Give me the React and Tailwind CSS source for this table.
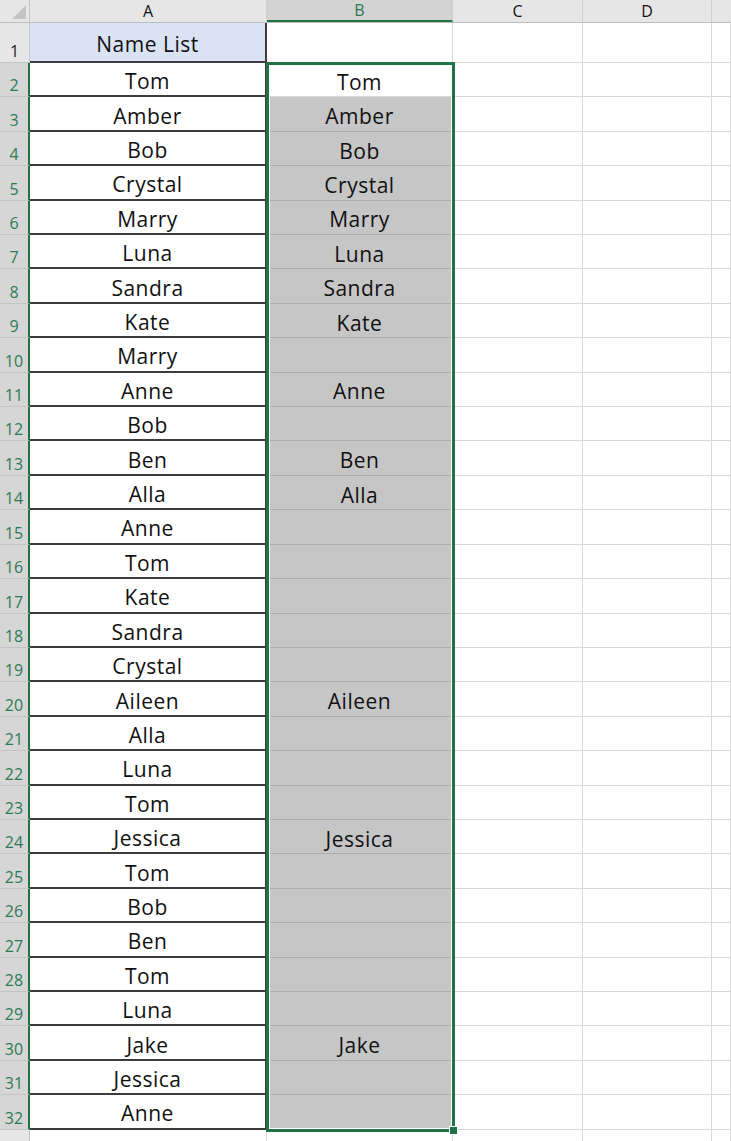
import React from "react";

const NAMES = [
  "Tom", "Amber", "Bob", "Crystal", "Marry", "Luna", "Sandra", "Kate", "Marry", "Anne",
  "Bob", "Ben", "Alla", "Anne", "Tom", "Kate", "Sandra", "Crystal", "Aileen", "Alla",
  "Luna", "Tom", "Jessica", "Tom", "Bob", "Ben", "Tom", "Luna", "Jake", "Jessica", "Anne",
];

// column B keeps only the first time a name shows up
const seen = new Set();
const UNIQUE = NAMES.map((n) => {
  if (seen.has(n)) return "";
  seen.add(n);
  return n;
});

const font = { fontFamily: '"Open Sans", "Liberation Sans", sans-serif' };

function HeaderCell({ label, className = "" }) {
  return (
    <div className={`h-full flex items-center justify-center text-[16px] font-medium leading-none border-r border-[#d0d0d0] ${className}`}>
      {label}
    </div>
  );
}

function RowLabel({ n, active }) {
  return (
    <div
      className={`w-[30px] shrink-0 h-full flex items-end justify-center pb-[3px] text-[16px] font-medium leading-none border-b border-[#c4c4c4] ${
        active ? "bg-[#d6d6d6] text-[#2f7a55] border-r-2 border-r-[#217346]" : "bg-[#e6e6e6] text-[#222] border-r border-r-[#c4c4c4]"
      }`}
    >
      {n}
    </div>
  );
}

function Blank({ w }) {
  return <div className={`${w} h-full border-r border-b border-[#d9d9d9] bg-white`} />;
}

const cellText = "flex items-center justify-center pt-[5px] text-[21px] font-medium tracking-[0.5px] leading-none";

export default function App() {
  return (
    <div className="relative w-[731px] h-[1141px] overflow-hidden bg-white text-[#111]" style={font}>
      {/* column headers */}
      <div className="flex h-[23px] bg-[#e6e6e6] border-b border-[#bdbdbd]">
        <div className="relative w-[30px] shrink-0 h-full border-r border-[#c4c4c4]">
          <svg className="absolute right-[3px] bottom-[3px]" width="14" height="14" viewBox="0 0 14 14">
            <polygon points="14,0 14,14 0,14" fill="#c4c4c4" />
          </svg>
        </div>
        <HeaderCell label="A" className="w-[237px] shrink-0" />
        <HeaderCell label="B" className="w-[186px] shrink-0 bg-[#d3d3d3] text-[#2f7a55] border-b-2 border-b-[#217346]" />
        <HeaderCell label="C" className="w-[130px] shrink-0" />
        <HeaderCell label="D" className="w-[129px] shrink-0" />
        <div className="flex-1 h-full" />
      </div>

      {/* row 1 */}
      <div className="flex h-[40px]">
        <RowLabel n={1} />
        <div className={`w-[237px] shrink-0 h-full bg-[#dae3f3] border-r-2 border-b-2 border-[#3d3d3d] ${cellText}`}>
          Name List
        </div>
        <Blank w="w-[186px] shrink-0" />
        <Blank w="w-[130px] shrink-0" />
        <Blank w="w-[129px] shrink-0" />
        <Blank w="flex-1" />
      </div>

      {/* rows 2..32 */}
      {NAMES.map((name, i) => {
        const b = UNIQUE[i];
        return (
          <div key={i} className="flex h-[34.42px]">
            <RowLabel n={i + 2} active />
            <div className={`w-[237px] shrink-0 h-full bg-white border-r-2 border-b-2 border-[#3d3d3d] ${cellText}`}>
              {name}
            </div>
            <div
              className={`w-[186px] shrink-0 h-full border-r border-b ${cellText} ${
                i === 0 ? "bg-white border-[#d9d9d9]" : "bg-[#c6c6c6] border-[#adadad]"
              }`}
            >
              {b}
            </div>
            <Blank w="w-[130px] shrink-0" />
            <Blank w="w-[129px] shrink-0" />
            <Blank w="flex-1" />
          </div>
        );
      })}

      {/* row 33 partly visible */}
      <div className="flex h-[20px]">
        <div className="w-[30px] shrink-0 h-full bg-[#e6e6e6] border-r border-[#c4c4c4]" />
        <Blank w="w-[237px] shrink-0" />
        <Blank w="w-[186px] shrink-0" />
        <Blank w="w-[130px] shrink-0" />
        <Blank w="w-[129px] shrink-0" />
        <Blank w="flex-1" />
      </div>

      {/* selection B2:B32 */}
      <div className="absolute left-[266px] top-[62px] w-[189px] h-[1070px] border-[3px] border-[#217346] shadow-[inset_0_0_0_1px_#ffffff] pointer-events-none">
        <div className="absolute -right-[6px] -bottom-[6px] w-[9px] h-[9px] bg-[#217346] border border-white" />
      </div>
    </div>
  );
}
